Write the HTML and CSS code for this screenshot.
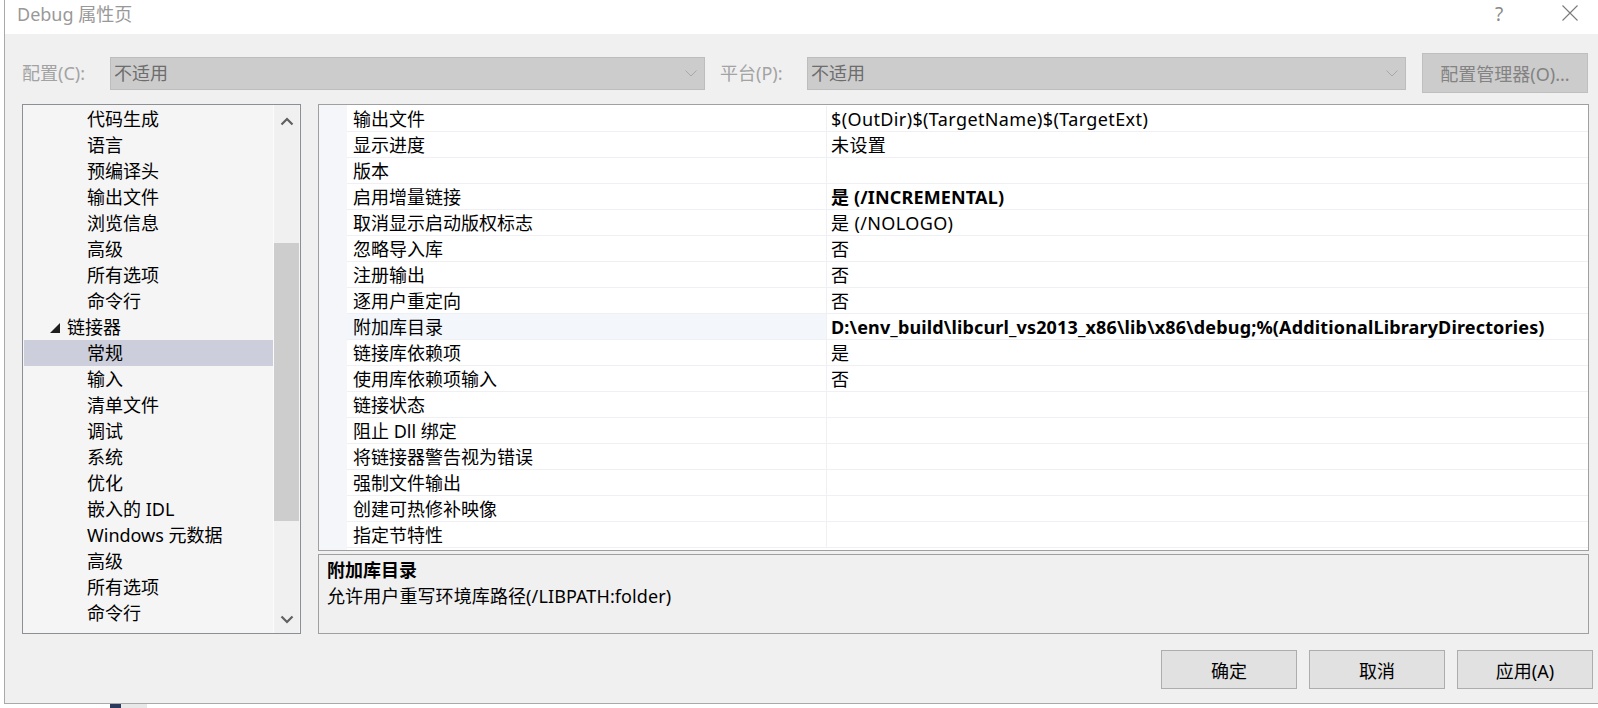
FILE: index.html
```html
<!DOCTYPE html>
<html lang="zh-CN">
<head>
<meta charset="utf-8">
<title>Debug 属性页</title>
<link rel="stylesheet" href="styles.css">
</head>
<body>
<div class="window">
  <div class="titlebar">
    <span class="title">Debug 属性页</span>
    <span class="help">?</span>
    <span class="close"><svg width="16" height="16" viewBox="0 0 16 16"><path d="M0.5 0.5 L15.5 15.5 M15.5 0.5 L0.5 15.5" stroke="#7a7a7a" stroke-width="1.1" fill="none"/></svg></span>
  </div>
  <div class="body">
    <div class="config-row">
      <span class="lbl lbl-config">配置(C):</span>
      <div class="combo combo-config"><span class="combo-text">不适用</span><svg class="combo-chev" width="12" height="7" viewBox="0 0 12 7"><path d="M0.5 0.5 L6 6 L11.5 0.5" stroke="#a8a8a8" fill="none"/></svg></div>
      <span class="lbl lbl-platform">平台(P):</span>
      <div class="combo combo-platform"><span class="combo-text">不适用</span><svg class="combo-chev" width="12" height="7" viewBox="0 0 12 7"><path d="M0.5 0.5 L6 6 L11.5 0.5" stroke="#a8a8a8" fill="none"/></svg></div>
      <span class="cfg-btn">配置管理器(O)...</span>
    </div>
    <div class="main">
      <div class="tree">
        <ul class="tree-list">
          <li class="child">代码生成</li>
          <li class="child">语言</li>
          <li class="child">预编译头</li>
          <li class="child">输出文件</li>
          <li class="child">浏览信息</li>
          <li class="child">高级</li>
          <li class="child">所有选项</li>
          <li class="child">命令行</li>
          <li class="parent"><svg class="expander" width="10" height="10" viewBox="0 0 10 10"><path d="M10 0 L10 10 L0 10 Z" fill="#1e1e1e"/></svg>链接器</li>
          <li class="child selected">常规</li>
          <li class="child">输入</li>
          <li class="child">清单文件</li>
          <li class="child">调试</li>
          <li class="child">系统</li>
          <li class="child">优化</li>
          <li class="child">嵌入的 IDL</li>
          <li class="child">Windows 元数据</li>
          <li class="child">高级</li>
          <li class="child">所有选项</li>
          <li class="child">命令行</li>
        </ul>
        <div class="vscroll">
          <div class="arrow arrow-up"><svg width="14" height="9" viewBox="0 0 14 9"><path d="M1.5 7.5 L7 2 L12.5 7.5" fill="none" stroke="#606060" stroke-width="2.2"/></svg></div>
          <div class="track"><div class="thumb"></div></div>
          <div class="arrow arrow-down"><svg width="14" height="9" viewBox="0 0 14 9"><path d="M1.5 1.5 L7 7 L12.5 1.5" fill="none" stroke="#606060" stroke-width="2.2"/></svg></div>
        </div>
      </div>
      <div class="right">
        <div class="grid">
          <div class="gutter"></div>
          <div class="rows">
            <div class="row"><div class="name">输出文件</div><div class="value">$(OutDir)$(TargetName)$(TargetExt)</div></div>
            <div class="row"><div class="name">显示进度</div><div class="value">未设置</div></div>
            <div class="row"><div class="name">版本</div><div class="value"></div></div>
            <div class="row"><div class="name">启用增量链接</div><div class="value bold">是 (/INCREMENTAL)</div></div>
            <div class="row"><div class="name">取消显示启动版权标志</div><div class="value">是 (/NOLOGO)</div></div>
            <div class="row"><div class="name">忽略导入库</div><div class="value">否</div></div>
            <div class="row"><div class="name">注册输出</div><div class="value">否</div></div>
            <div class="row"><div class="name">逐用户重定向</div><div class="value">否</div></div>
            <div class="row current"><div class="name">附加库目录</div><div class="value bold">D:\env_build\libcurl_vs2013_x86\lib\x86\debug;%(AdditionalLibraryDirectories)</div></div>
            <div class="row"><div class="name">链接库依赖项</div><div class="value">是</div></div>
            <div class="row"><div class="name">使用库依赖项输入</div><div class="value">否</div></div>
            <div class="row"><div class="name">链接状态</div><div class="value"></div></div>
            <div class="row"><div class="name">阻止 Dll 绑定</div><div class="value"></div></div>
            <div class="row"><div class="name">将链接器警告视为错误</div><div class="value"></div></div>
            <div class="row"><div class="name">强制文件输出</div><div class="value"></div></div>
            <div class="row"><div class="name">创建可热修补映像</div><div class="value"></div></div>
            <div class="row"><div class="name">指定节特性</div><div class="value"></div></div>
          </div>
        </div>
        <div class="desc">
          <div class="desc-title">附加库目录</div>
          <div class="desc-text">允许用户重写环境库路径(/LIBPATH:folder)</div>
        </div>
      </div>
    </div>
    <div class="buttons">
      <span class="btn">确定</span>
      <span class="btn">取消</span>
      <span class="btn">应用(A)</span>
    </div>
  </div>
</div>
<div class="peek">
  <span class="peek-dark"></span><span class="peek-light"></span>
</div>
</body>
</html>
```

FILE: styles.css
```css
html, body {
  margin: 0;
  padding: 0;
}
body {
  width: 1598px;
  height: 708px;
  overflow: hidden;
  background: #ffffff;
  font-family: "Noto Sans", "Noto Sans CJK SC", sans-serif;
  font-size: 18px;
  color: #000;
}
.window {
  margin-left: 4px;
  border-left: 1px solid #a9a9a9;
  border-bottom: 1px solid #a9a9a9;
  height: 703px;
  display: flex;
  flex-direction: column;
}
.titlebar {
  height: 34px;
  flex: none;
  background: #fff;
  display: flex;
  align-items: center;
  padding-left: 12px;
  padding-right: 5px;
}
.title {
  color: #999999;
  font-size: 18px;
  line-height: 26px;
  flex: 1;
  margin-top: -6px;
}
.help {
  width: 30px;
  text-align: center;
  color: #8a8a8a;
  font-size: 19px;
  line-height: 26px;
  margin-top: -6px;
}
.close {
  width: 46px;
  margin-left: 33px;
  display: flex;
  justify-content: center;
  margin-top: -8px;
}
.body {
  flex: 1;
  background: #f0f0f0;
  padding: 19px 5px 0 17px;
}
.config-row {
  display: flex;
  align-items: center;
  height: 40px;
}
.lbl {
  color: #a3a3a3;
  line-height: 26px;
}
.lbl-config {
  width: 88px;
}
.lbl-platform {
  width: 87px;
  margin-left: 15px;
}
.combo {
  box-sizing: border-box;
  height: 33px;
  background: #cccccc;
  border: 1px solid #bdbdbd;
  display: flex;
  align-items: center;
  padding-left: 3px;
  padding-right: 7px;
}
.combo-config { width: 595px; }
.combo-platform { width: 599px; }
.combo-text {
  flex: 1;
  color: #6d6d6d;
  line-height: 26px;
}
.combo-chev { display: block; }
.cfg-btn {
  box-sizing: border-box;
  width: 166px;
  height: 40px;
  margin-left: 16px;
  background: #cccccc;
  border: 1px solid #bfbfbf;
  color: #838383;
  display: flex;
  align-items: center;
  justify-content: center;
}
.main {
  display: flex;
  margin-top: 11px;
  gap: 17px;
}
.tree {
  box-sizing: border-box;
  width: 279px;
  height: 530px;
  border: 1px solid #8c8f96;
  background: #f5f5f5;
  padding: 1px 0 0 1px;
  display: flex;
}
.tree-list {
  list-style: none;
  margin: 0;
  padding: 0;
  width: 249px;
}
.tree-list li {
  height: 26px;
  line-height: 26px;
  white-space: nowrap;
  display: flex;
  align-items: center;
}
.tree-list .child { padding-left: 63px; }
.tree-list .parent { padding-left: 26px; }
.tree-list .selected { background: #cccedb; }
.expander {
  display: block;
  margin-right: 7px;
  margin-top: 2px;
}
.vscroll {
  box-sizing: border-box;
  width: 26px;
  border-left: 1px solid #fbfbfb;
  background: #f0f0f0;
  display: flex;
  flex-direction: column;
  margin-top: -1px;
}
.arrow {
  display: flex;
  justify-content: center;
  align-items: center;
}
.arrow-up { height: 33px; }
.arrow-down { height: 28px; }
.track { flex: 1; }
.thumb {
  margin-top: 105px;
  height: 278px;
  background: #cdcdcd;
}
.right {
  width: 1271px;
  display: flex;
  flex-direction: column;
}
.grid {
  box-sizing: border-box;
  height: 447px;
  border: 1px solid #a0a0a0;
  background: #ffffff;
  display: flex;
}
.gutter {
  width: 28px;
  background: #f4f6fa;
  flex: none;
}
.rows {
  flex: 1;
  padding-top: 1px;
}
.row {
  box-sizing: border-box;
  height: 26px;
  border-bottom: 1px solid #eef0f3;
  display: flex;
  line-height: 25px;
}
.name {
  box-sizing: border-box;
  width: 480px;
  border-right: 1px solid #eef0f3;
  padding-left: 6px;
  padding-top: 1px;
  white-space: nowrap;
}
.row.current .name { background: #f3f6fa; }
.value {
  padding-left: 4px;
  padding-top: 1px;
  white-space: nowrap;
  letter-spacing: 0.38px;
}
.value.bold {
  font-weight: bold;
  letter-spacing: 0.15px;
}
.desc {
  box-sizing: border-box;
  height: 80px;
  margin-top: 3px;
  border: 1px solid #a0a0a0;
  background: #f0f0f0;
  padding: 2px 8px;
  line-height: 26px;
}
.desc-title { font-weight: bold; }
.desc-text { letter-spacing: 0.1px; }
.buttons {
  display: flex;
  justify-content: flex-end;
  margin-top: 16px;
  gap: 12px;
}
.btn {
  box-sizing: border-box;
  width: 136px;
  height: 39px;
  background: #e1e1e1;
  border: 1px solid #adadad;
  display: flex;
  align-items: center;
  justify-content: center;
}
.peek {
  display: flex;
  height: 4px;
  padding-left: 110px;
}
.peek-dark {
  width: 11px;
  background: #2b3a5c;
}
.peek-light {
  width: 26px;
  background: #e8e8e8;
}
```
